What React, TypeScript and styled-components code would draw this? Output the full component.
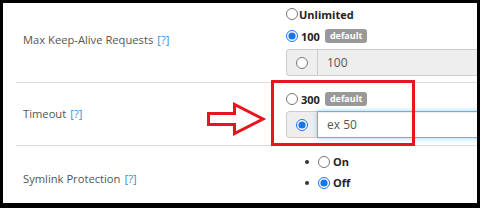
import React from 'react';
import styled, { createGlobalStyle } from 'styled-components';

const GlobalStyle = createGlobalStyle`
  html, body {
    margin: 0;
    padding: 0;
    background: #000;
  }
  * {
    box-sizing: border-box;
  }
`;

const Frame = styled.div`
  width: 480px;
  height: 208px;
  padding: 3px 3px 5px 3px;
  background: #000;
`;

const Sheet = styled.div`
  position: relative;
  height: 100%;
  background: #fff;
  overflow: hidden;
  font-family: 'Open Sans', 'Liberation Sans', sans-serif;
`;

const Rows = styled.div`
  margin-left: 13px;
`;

const Row = styled.div<{ $top: number; $bottom: number }>`
  display: grid;
  grid-template-columns: 270px 1fr;
  align-items: center;
  border-bottom: 1px solid #ddd;
  padding: ${(p) => p.$top}px 0 ${(p) => p.$bottom}px;
`;

const Label = styled.div<{ $drop?: number }>`
  padding-left: 7px;
  padding-top: ${(p) => p.$drop ?? 0}px;
  font-size: 11.2px;
  color: #555;
  white-space: nowrap;
`;

const Help = styled.span`
  color: #3a8ddb;
  margin-left: 4px;
`;

const Options = styled.div`
  display: flex;
  flex-direction: column;
`;

const Option = styled.label<{ $gap?: number }>`
  display: flex;
  align-items: center;
  height: 22px;
  gap: ${(p) => p.$gap ?? 3}px;
  font-size: 11px;
  font-weight: 700;
  color: #222;
`;

const Radio = styled.input.attrs({ type: 'radio' })`
  width: 12px;
  height: 12px;
  margin: 0;
  accent-color: #1a73e8;
`;

const Badge = styled.span`
  display: inline-block;
  margin-left: 2px;
  padding: 2px 5px 2px;
  border-radius: 3px;
  background: #999;
  color: #fff;
  font-size: 9px;
  font-weight: 700;
  line-height: 10px;
`;

const Group = styled.div<{ $mt: number }>`
  display: flex;
  height: 27px;
  width: 320px;
  margin-top: ${(p) => p.$mt}px;
`;

const Addon = styled.span`
  display: flex;
  align-items: center;
  justify-content: center;
  width: 31px;
  background: #eee;
  border: 1px solid #ccc;
  border-right: none;
  border-radius: 4px 0 0 4px;
`;

const Field = styled.input<{ $focus?: boolean }>`
  flex: 1;
  height: 100%;
  padding: 0 9px;
  font-family: 'Open Sans', 'Liberation Sans', sans-serif;
  font-size: 12px;
  color: #555;
  background: ${(p) => (p.$focus ? '#fff' : '#eee')};
  border: 1px solid ${(p) => (p.$focus ? '#66afe9' : '#ccc')};
  box-shadow: ${(p) =>
    p.$focus ? 'inset 0 1px 1px rgba(0,0,0,.075), 0 0 5px rgba(102,175,233,.6)' : 'none'};
  outline: none;
`;

const Bullets = styled.ul`
  margin: 0;
  padding-left: 19px;
  list-style: none;
`;

const Bullet = styled.li`
  display: flex;
  align-items: center;
  gap: 9px;
  height: 21px;
  &::before {
    content: '';
    width: 4px;
    height: 4px;
    border-radius: 50%;
    background: #333;
  }
`;

const Highlight = styled.div`
  position: absolute;
  left: 268px;
  top: 77px;
  width: 144px;
  height: 66px;
  border: 3px solid #e8141f;
`;

const Arrow = styled.svg`
  position: absolute;
  left: 200px;
  top: 96px;
`;

export default function App() {
  return (
    <Frame>
      <GlobalStyle />
      <Sheet>
        <Rows>
          <Row $top={0} $bottom={6}>
            <Label>
              Max Keep-Alive Requests<Help>[?]</Help>
            </Label>
            <Options>
              <Option $gap={1}>
                <Radio name="keep" />
                Unlimited
              </Option>
              <Option>
                <Radio name="keep" defaultChecked />
                100 <Badge>default</Badge>
              </Option>
              <Group $mt={2}>
                <Addon>
                  <Radio name="keep" />
                </Addon>
                <Field defaultValue="100" disabled />
              </Group>
            </Options>
          </Row>
          <Row $top={5} $bottom={7}>
            <Label>
              Timeout<Help>[?]</Help>
            </Label>
            <Options>
              <Option>
                <Radio name="timeout" />
                300 <Badge>default</Badge>
              </Option>
              <Group $mt={1}>
                <Addon>
                  <Radio name="timeout" defaultChecked />
                </Addon>
                <Field defaultValue="ex 50" $focus />
              </Group>
            </Options>
          </Row>
          <Row $top={5} $bottom={16}>
            <Label $drop={12}>
              Symlink Protection<Help>[?]</Help>
            </Label>
            <Bullets>
              <Bullet>
                <Option>
                  <Radio name="sym" />
                  On
                </Option>
              </Bullet>
              <Bullet>
                <Option>
                  <Radio name="sym" defaultChecked />
                  Off
                </Option>
              </Bullet>
            </Bullets>
          </Row>
        </Rows>
        <Highlight />
        <Arrow width="66" height="40" viewBox="0 0 66 40">
          <path
            d="M5.5 14.5 H31.5 V5.5 L60 20 L31.5 34.5 V25.5 H5.5 Z"
            fill="#fff"
            stroke="#e8141f"
            strokeWidth="3"
            strokeLinejoin="miter"
          />
        </Arrow>
      </Sheet>
    </Frame>
  );
}
